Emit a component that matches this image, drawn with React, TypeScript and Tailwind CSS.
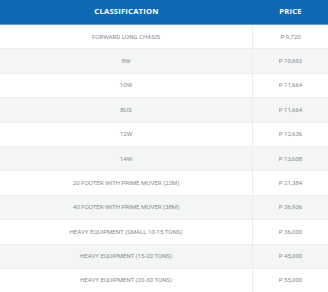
const rows: [string, string][] = [
  ["FORWARD LONG CHASIS", "P 9,720"],
  ["8W", "P 10,692"],
  ["10W", "P 11,664"],
  ["BUS", "P 11,664"],
  ["12W", "P 12,636"],
  ["14W", "P 13,608"],
  ["20 FOOTER WITH PRIME MOVER (22M)", "P 21,384"],
  ["40 FOOTER WITH PRIME MOVER (38M)", "P 36,936"],
  ["HEAVY EQUIPMENT (SMALL 10-15 TONS)", "P 36,000"],
  ["HEAVY EQUIPMENT (15-20 TONS)", "P 45,000"],
  ["HEAVY EQUIPMENT (20-30 TONS)", "P 55,000"],
];

export default function App() {
  return (
    <div className="w-[328px] h-[292px] overflow-hidden bg-white font-['Roboto',sans-serif]">
      <div className="flex h-[25px] items-center border-b border-[#5b9fd6] bg-[#0e6ab4] font-['Open_Sans',sans-serif] text-[7.6px] font-bold tracking-[0.03em] text-white">
        <div className="w-[253px] text-center">CLASSIFICATION</div>
        <div className="flex-1 text-center">PRICE</div>
      </div>
      {rows.map(([name, price], i) => (
        <div
          key={name}
          className={`flex h-[24.4px] items-stretch border-b border-[#eceeee] text-[6.2px] tracking-[-0.01em] text-[#878e94] ${
            i % 2 === 1 ? "bg-[#f4f5f5]" : "bg-white"
          }`}
        >
          <div className="flex w-[253px] items-center justify-center border-r border-[#eceeee] pt-[1px]">{name}</div>
          <div className="flex flex-1 items-center justify-center pt-[1px]">{price}</div>
        </div>
      ))}
    </div>
  );
}
